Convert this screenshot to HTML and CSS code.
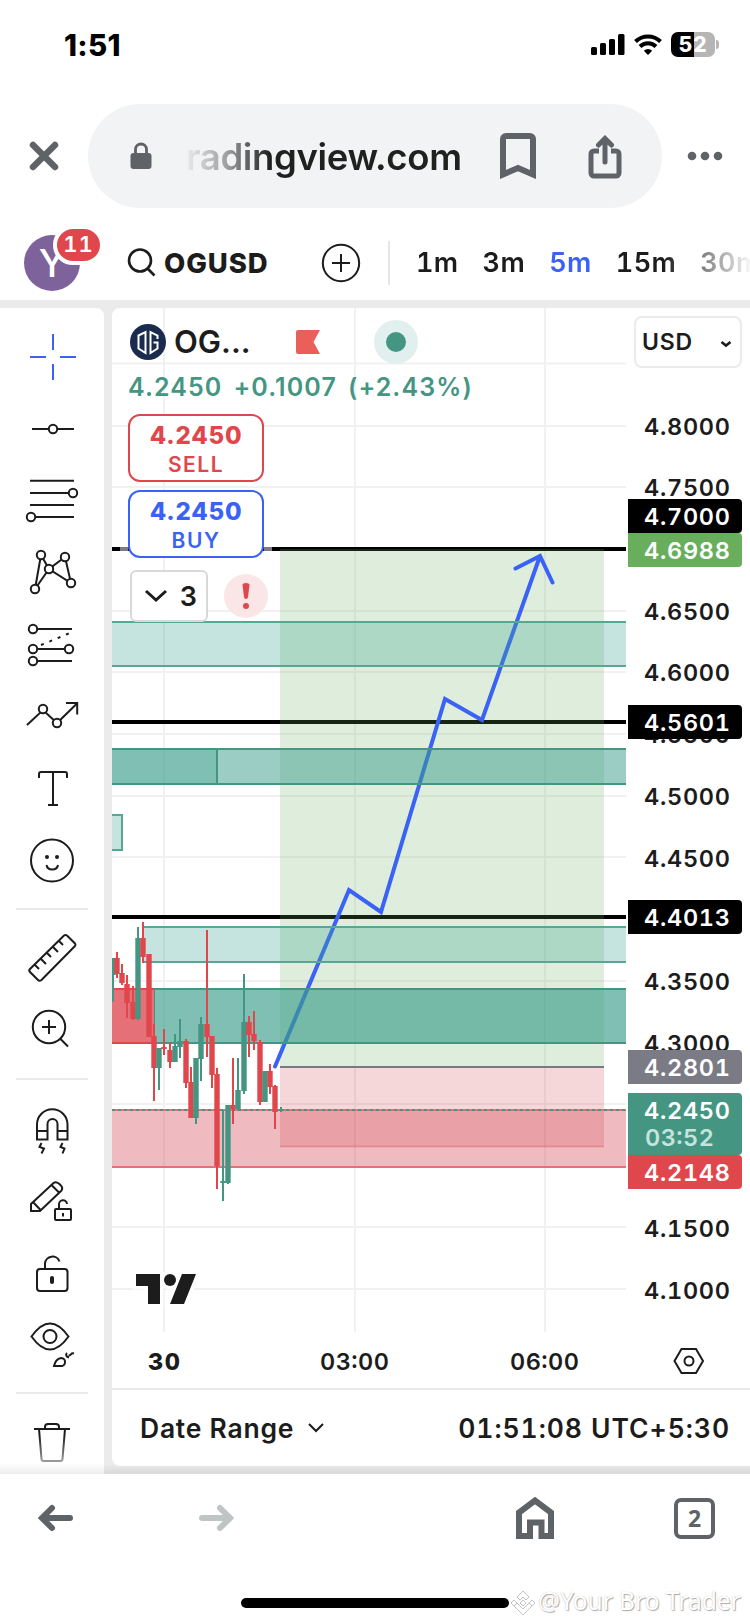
FILE: index.html
```html
<!DOCTYPE html>
<html lang="en">
<head>
<meta charset="UTF-8" />
<meta name="viewport" content="width=device-width, initial-scale=1.0">
<title>OGUSD 4.2450 – Chart</title>
<link rel="stylesheet" href="styles.css">
</head>
<body>

<!-- Status bar -->
<div class="status-bar">
  <span class="clock">1:51</span>
  <div class="status-icons">
    <svg width="34" height="22" viewBox="0 0 34 22"><rect x="0" y="13" width="6" height="8" rx="1.5"/><rect x="9" y="9" width="6" height="12" rx="1.5"/><rect x="18" y="5" width="6" height="16" rx="1.5"/><rect x="27" y="0" width="6.5" height="21" rx="1.5"/></svg>
    <svg class="wifi" width="28" height="22" viewBox="0 0 28 22"><path d="M1.5 7.5a18 18 0 0 1 25 0" /><path d="M6 12.5a11.5 11.5 0 0 1 16 0"/><path class="solid" d="M14 21l-4.2-4.2a6 6 0 0 1 8.4 0z"/></svg>
    <div class="battery"><span>52</span></div>
  </div>
</div>

<!-- Address bar -->
<div class="address-bar">
  <svg class="close" width="30" height="30" viewBox="0 0 30 30"><path d="M4 4l22 22M26 4L4 26"/></svg>
  <div class="url-pill">
    <svg class="lock" width="22" height="28" viewBox="0 0 22 28"><path d="M5.5 12V7.5a5.5 5.5 0 0 1 11 0V12" fill="none" stroke="#5f6368" stroke-width="2.8"/><rect x="0.5" y="11" width="21" height="16" rx="3" fill="#5f6368"/></svg>
    <span class="url">radingview.com</span>
    <svg class="bookmark" width="36" height="46" viewBox="0 0 36 46"><path d="M3 41.5V6a3 3 0 0 1 3-3h24a3 3 0 0 1 3 3v35.500L18 35z"/></svg>
    <svg class="share" width="34" height="44" viewBox="0 0 34 44"><path d="M11 16H6a3 3 0 0 0-3 3v19a3 3 0 0 0 3 3h22a3 3 0 0 0 3-3V19a3 3 0 0 0-3-3h-5"/><path d="M17 27V4M10.5 10L17 3.5 23.5 10" stroke-linecap="round"/></svg>
  </div>
  <svg class="more" width="36" height="10" viewBox="0 0 36 10"><circle cx="5" cy="5" r="4.3"/><circle cx="18" cy="5" r="4.3"/><circle cx="31" cy="5" r="4.3"/></svg>
</div>

<!-- Symbol and interval toolbar -->
<div class="toolbar">
  <div class="avatar">Y<span class="badge">11</span></div>
  <svg class="search" width="30" height="30" viewBox="0 0 30 30"><circle cx="13" cy="12.5" r="11"/><path d="M20.5 20.5l7 7"/></svg>
  <b class="symbol">OGUSD</b>
  <svg class="add" width="40" height="40" viewBox="0 0 40 40"><circle cx="20" cy="20" r="18.2"/><path d="M20 11v18M11 20h18"/></svg>
  <div class="intervals">
    <span>1m</span>
    <span>3m</span>
    <span class="active">5m</span>
    <span>15m</span>
    <span>30m</span>
  </div>
</div>

<div class="workspace">
  <!-- Drawing tools -->
  <div class="tools">
    <svg class="tool cross" viewBox="0 0 104 72"><path d="M53 13v16M53 43v16M30 36h16M60 36h16"/></svg>
    <svg class="tool" viewBox="0 0 104 72"><path d="M32 36h42"/><circle cx="53" cy="36" r="4.2"/></svg>
    <svg class="tool" viewBox="0 0 104 72"><path d="M30 15.800h44M30 28h44M30 40h44M30 52h44"/><circle cx="73" cy="28" r="4.2"/><circle cx="31" cy="52" r="4.2"/></svg>
    <svg class="tool" viewBox="0 0 104 72"><path d="M41 18L35 52 49 32 65 20l6 26-22-14zM41 18l8 14"/><circle cx="41" cy="18" r="4.2"/><circle cx="65" cy="20" r="4.2"/><circle cx="49" cy="32" r="4.2"/><circle cx="35" cy="52" r="4.2"/><circle cx="71" cy="46" r="4.2"/></svg>
    <svg class="tool" viewBox="0 0 104 72"><path d="M33 20h39M33 40h36M33 52h39"/><path d="M41 36l29-12" stroke-dasharray="3 6"/><circle cx="33" cy="20" r="4.2"/><circle cx="33" cy="40" r="4.2"/><circle cx="69" cy="40" r="4.2"/><circle cx="33" cy="52" r="4.2"/></svg>
    <svg class="tool" viewBox="0 0 104 72"><path d="M27 44l16-15 14 13 20-19.500M66 22h11.200v11.500"/><circle cx="43" cy="28" r="4.2"/><circle cx="57" cy="42" r="4.2"/></svg>
    <svg class="tool" viewBox="0 0 104 72"><path d="M39 25v-4q0-2 2-2h24q2 0 2 2v4M53 19v33M48 52h10"/></svg>
    <svg class="tool" viewBox="0 0 104 72"><circle cx="52" cy="35.5" r="21"/><path d="M46.500 40c1 6 10.500 6 11.500 0"/><circle class="dot" cx="47" cy="32" r="2"/><circle class="dot" cx="57" cy="32" r="2"/></svg>
    <hr class="sep-shapes">
    <svg class="tool" viewBox="0 0 104 72"><path d="M64 13.500q1.500-1 3 0l8 8q1 1.500 0 2.500L41.500 58q-2 1.500-3.500 0L30 50q-1.500-1.500 0-3zM35 43l4 4M41 37l5 5M47 31l4 4M53 25l5 5M59 19l4 4"/></svg>
    <svg class="tool" viewBox="0 0 104 72"><circle cx="49" cy="33" r="16.2"/><path d="M49 26v14M42 33h14M60 44.500l8 8"/></svg>
    <hr class="sep-measure">
    <svg class="tool" viewBox="0 0 104 72"><path d="M37 44.500V29.500a15 15 0 0 1 30.500 0v15h-10V29a5 5 0 0 0-10 0v15.500zM37 36h10.500M57.500 36h10M41.500 48l-2 4 4.500 1.500-2.500 5M62.500 48l-2 4 4 1.500-2 5"/></svg>
    <svg class="tool" viewBox="0 0 104 72"><path d="M31 44v-7l22.500-21q3-2 6.500 1.500t1.500 6L40 44zM33 35l8 8.500M51 17.500l8 8"/><rect x="55" y="42" width="16" height="11" rx="1"/><path d="M59 42v-4.500a4 4 0 0 1 8-.5M63 46v3.500"/></svg>
    <svg class="tool" viewBox="0 0 104 72"><rect x="37" y="30" width="30.5" height="22" rx="3"/><path d="M45 30v-5.500a7.500 7.500 0 0 1 14.500-2"/><rect class="dot" x="50" y="37" width="4" height="8" rx="2"/></svg>
    <svg class="tool" viewBox="0 0 104 72"><path d="M31.500 25.500q18.500-26 37 0q-18.500 26-37 0z"/><circle cx="50" cy="25.5" r="6.5"/><path d="M54 55q1.500-7 7-8 4.500.5 4 4.500t-5 3.500zM67 42c-2 2-.5 4 2 4.500M68.500 44.500c3 0 2-3 5.500-2"/></svg>
    <hr class="sep-manage">
    <svg class="tool" viewBox="0 0 104 72"><defs><linearGradient id="fade" x1="0" y1="0" x2="0" y2="1"><stop offset="0.2" stop-color="#1c1c1c"/><stop offset="1" stop-color="#999"/></linearGradient></defs><path d="M34 22h36M45 22v-2q0-3 3-3h8q3 0 3 3v2"/><path d="M39 22l2.500 30q.2 2 2 2h17q1.800 0 2-2L65 22" stroke="url(#fade)"/></svg>
  </div>

  <div class="chart-panel">
    <div class="chart">
      <svg class="plot" width="638" height="1080" viewBox="112 308 638 1080">
        <path class="grid" d="M112 363.500h514M112 426h514M112 487h514M112 611h514M112 672h514M112 734h514M112 796h514M112 857h514M112 981h514M112 1104h514M112 1227h514M112 1289h514M164 308v1024M355 308v1024M545 308v1024"/>
        <path class="level" d="M112 549h514M112 722h514M112 917h514"/>

        <!-- long position -->
        <rect class="target" x="280" y="549" width="324" height="518"/>
        <rect class="stop" x="280" y="1067" width="324" height="80"/>
        <path class="entry" d="M280 1067h324"/>
        <path class="stop-line" d="M280 1146.500h324"/>
        <path class="forecast" d="M275 1066.500L349 890 381 912 445 699 482 720 540 556M515.500 568.500L540 556 552.500 582.500"/>

        <!-- supply and demand zones -->
        <rect class="zone-light" x="112" y="622" width="514" height="44"/>
        <path class="edge-light" d="M112 622h514M112 666h514"/>
        <rect class="zone-dark" x="112" y="749" width="105" height="35"/>
        <rect class="zone-mid" x="217" y="749" width="409" height="35"/>
        <path class="edge" d="M112 749h514M112 784h514M217 749v35"/>
        <rect class="zone-light" x="112" y="815" width="10" height="35"/>
        <path class="edge-light" d="M112 815h10v35h-10"/>
        <rect class="zone-light" x="143" y="927" width="483" height="35"/>
        <path class="edge-light" d="M143 927h483M143 962h483"/>
        <rect class="zone-dark" x="154" y="989" width="472" height="54"/>
        <path class="edge" d="M626 989H154v54h472"/>
        <rect class="zone-sold" x="112" y="989" width="42" height="54"/>
        <path class="edge-red" d="M112 989h42M112 1043h42"/>
        <rect class="zone-pink" x="112" y="1110" width="514" height="57"/>
        <path class="edge-pink" d="M112 1110h514M112 1167h514"/>
        <path class="last-price" d="M112 1110h514"/>

        <g id="candles"></g>

        <!-- TradingView mark -->
        <path class="halo" d="M136 1274h24v30h-12v-18h-12zM182 1274h14l-12 30h-14z"/>
        <circle class="halo" cx="170" cy="1280" r="6"/>
        <path class="mark" d="M136 1274h24v30h-12v-18h-12zM182 1274h14l-12 30h-14z"/>
        <circle class="mark" cx="170" cy="1280" r="6"/>

        <g id="prices" class="axis"></g>
        <g class="axis">
          <text x="148" y="1370" textLength="32" class="day">30</text>
          <text x="320" y="1370" textLength="69">03:00</text>
          <text x="510" y="1370" textLength="69">06:00</text>
        </g>
        <path class="settings" d="M681.500 1349h14.500l7 12-7 12h-14.500l-7-12z"/>
        <circle class="settings" cx="689" cy="1361" r="4.5"/>
      </svg>

      <div class="legend">
        <div class="title">
          <svg class="coin" width="36" height="36" viewBox="0 0 36 36"><circle cx="18" cy="18" r="18"/><path d="M8.500 11.500L15.500 8v21l-7-4.500zM27.500 15v-3.500L20.500 8v21l7-4.500V18.500h-4"/></svg>
          <span class="name">OG...</span>
          <svg class="flag" width="24" height="24" viewBox="0 0 24 24"><path d="M2 0h22l-6.500 12L24 24H2q-2 0-2-2V2q0-2 2-2z"/></svg>
          <span class="market-open"></span>
        </div>
        <div class="change"><span>4.2450</span><span>+0.1007</span><span>(+2.43%)</span></div>
        <div class="order sell"><b>4.2450</b><span>SELL</span></div>
        <div class="order buy"><b>4.2450</b><span>BUY</span></div>
        <div class="indicators">
          <div class="count"><svg width="24" height="14" viewBox="0 0 24 14"><path d="M2 2l10 9L22 2"/></svg>3</div>
          <svg class="alert" width="44" height="44" viewBox="0 0 44 44"><circle class="alert-bg" cx="22" cy="22" r="22"/><path d="M18.500 11q0-2 3.500-2t3.500 2l-1.500 12q-.3 2-2 2t-2-2z"/><circle cx="22" cy="32" r="3"/></svg>
        </div>
      </div>

      <div class="currency">USD<svg width="12" height="8" viewBox="0 0 12 8"><path d="M1.500 2L6 5.500 10.500 2"/></svg></div>
    </div>

    <div class="range-bar">
      <span class="range">Date Range</span>
      <svg width="18" height="12" viewBox="0 0 18 12"><path d="M2 2l7 7 7-7"/></svg>
      <span class="utc">01:51:08 UTC+5:30</span>
    </div>
  </div>
</div>

<!-- Browser navigation -->
<div class="bottom-nav">
  <svg class="back" width="36" height="30" viewBox="0 0 36 30"><path d="M33 15H5M15 5L5 15l10 10"/></svg>
  <svg class="forward" width="36" height="30" viewBox="0 0 36 30"><path d="M4 15h28M22 5l10 10-10 10"/></svg>
  <svg class="home" width="38" height="42" viewBox="0 0 38 42"><path d="M3 39V15.500L19 3.500l16 12V39h-9.500V25.500h-11.500V39z"/></svg>
  <div class="tabs">2</div>
</div>
<div class="home-bar">
  <div class="pill"></div>
  <svg class="diamond" width="28" height="28" viewBox="0 0 28 28"><path d="M8 8l6-6 6 6-3 3-3-3-3 3zM2 14l3-3 3 3-3 3zM20 14l3-3 3 3-3 3zM11 14l3-3 3 3-3 3zM5 17l3-3 6 6 6-6 3 3-9 9z"/></svg>
  <span class="watermark">@Your Bro Trader</span>
</div>

<script>
  const NS = 'http://www.w3.org/2000/svg';

  function add(parent, tag, attrs, text) {
    const el = document.createElementNS(NS, tag);
    for (const key in attrs) el.setAttribute(key, attrs[key]);
    if (text) el.textContent = text;
    parent.appendChild(el);
  }

  // x, high, low, body top, body bottom, direction
  const candles = [
    [113, 958, 1001.5, 958, 975, 'up'],
    [117, 952, 978, 958, 974, 'down'],
    [122, 964, 985, 973, 983, 'down'],
    [127, 975, 1018, 984, 1003, 'down'],
    [133, 986, 1020, 1002, 1019, 'down'],
    [138, 927, 1020, 938, 1019, 'up'],
    [143, 922, 963, 938, 957, 'down'],
    [149, 954, 1037, 954, 1037, 'down'],
    [154, 1024, 1101, 1036, 1068, 'down'],
    [159, 1048, 1090, 1048, 1068, 'up'],
    [164, 1029, 1055, 1047, 1049, 'down'],
    [170, 1042, 1068, 1050, 1062, 'down'],
    [175, 1034, 1062, 1046, 1062, 'up'],
    [180, 1019, 1058, 1041, 1047, 'up'],
    [186, 1039, 1088, 1041, 1083, 'down'],
    [191, 1067, 1118, 1082, 1118, 'down'],
    [196, 1058, 1124, 1058, 1118, 'up'],
    [201, 1017, 1081, 1024, 1059, 'up'],
    [207, 930, 1057, 1024, 1037, 'down'],
    [212, 1036, 1088, 1036, 1075, 'down'],
    [217, 1068, 1189, 1074, 1166, 'down'],
    [223, 1110, 1201, 1181, 1183, 'up'],
    [228, 1105, 1184, 1105, 1183, 'up'],
    [233, 1058, 1124, 1105, 1109, 'down'],
    [238, 1058, 1110, 1090, 1109, 'up'],
    [244, 974, 1094, 1022, 1091, 'up'],
    [249, 1016, 1057, 1022, 1035, 'down'],
    [254, 1011, 1050, 1034, 1041, 'down'],
    [260, 1040, 1105, 1042, 1102, 'down'],
    [265, 1071, 1102, 1071, 1102, 'up'],
    [270, 1064, 1094, 1071, 1087, 'down'],
    [275, 1085, 1129, 1086, 1112, 'down'],
    [281, 1107, 1112, 1109, 1111, 'up']
  ];
  const candleBox = document.getElementById('candles');
  candles.forEach(([x, high, low, top, bottom, dir]) => {
    add(candleBox, 'rect', { x: x - 1, y: high, width: 2, height: low - high, class: dir });
    add(candleBox, 'rect', { x: x - 2.7, y: top, width: 5.4, height: bottom - top, class: dir });
  });

  const priceBox = document.getElementById('prices');
  const ticks = [
    ['4.8000', 426], ['4.7500', 487.5], ['4.6500', 611], ['4.6000', 672.5], ['4.5500', 734],
    ['4.5000', 796], ['4.4500', 858], ['4.3500', 981], ['4.3000', 1043], ['4.1500', 1228], ['4.1000', 1290]
  ];
  ticks.forEach(([label, y]) => add(priceBox, 'text', { x: 644, y: y + 8.5, textLength: 86 }, label));

  const tags = [
    ['4.7000', 499, 34, '#000'], ['4.6988', 533, 34, '#68ae5d'], ['4.5601', 705, 34, '#000'],
    ['4.4013', 900, 34, '#000'], ['4.2801', 1050, 34, '#7a7b85'], ['4.2450', 1093, 62, '#449682'],
    ['4.2148', 1155, 34, '#e0474c']
  ];
  tags.forEach(([label, y, h, fill]) => {
    add(priceBox, 'path', { d: `M628 ${y}h110q4 0 4 4v${h - 8}q0 4-4 4h-110z`, fill });
    add(priceBox, 'text', { x: 644, y: y + 25.5, textLength: 86, class: 'on-tag' }, label);
  });
  add(priceBox, 'text', { x: 645, y: 1146, textLength: 69, class: 'countdown' }, '03:52');
</script>

</body>
</html>
```

FILE: styles.css
```css
* {
  box-sizing: border-box;
  margin: 0;
  padding: 0;
}
body {
  font-family: Inter, 'Liberation Sans', sans-serif;
  font-weight: 600;
  background: #fff;
  color: #1c1c1c;
  width: 750px;
  height: 1624px;
  overflow: hidden;
}
svg {
  display: block;
  flex: none;
  fill: none;
}

/* status bar */
.status-bar {
  height: 104px;
  display: flex;
  justify-content: space-between;
  padding: 32px 31px 0 64px;
  color: #000;
}
.clock {
  font-size: 29.5px;
  line-height: 27px;
  font-weight: 800;
  letter-spacing: 0.3px;
}
.status-icons {
  display: flex;
  align-items: center;
  height: 25px;
  gap: 9px;
}
.status-icons svg {
  fill: #000;
}
.status-icons .wifi {
  fill: none;
  stroke: #000;
  stroke-width: 4;
}
.status-icons .wifi .solid {
  fill: #000;
  stroke: none;
}
.battery {
  position: relative;
  width: 44px;
  height: 25px;
  margin-right: 4px;
  border-radius: 7px;
  background: linear-gradient(90deg, #000 52%, #b5b5b5 52%);
  color: #fff;
  font-size: 21px;
  line-height: 25px;
  font-weight: 800;
  letter-spacing: 1px;
  text-align: center;
}
.battery::after {
  content: '';
  position: absolute;
  right: -4px;
  top: 8px;
  width: 3px;
  height: 9px;
  border-radius: 0 3px 3px 0;
  background: #b5b5b5;
}

/* address bar */
.address-bar {
  height: 104px;
  display: flex;
  align-items: center;
  padding-left: 29px;
}
.close {
  stroke: #5f6368;
  stroke-width: 6.5;
  stroke-linecap: round;
}
.url-pill {
  width: 574px;
  height: 104px;
  margin-left: 29px;
  padding-left: 42px;
  border-radius: 52px;
  background: #f1f3f5;
  display: flex;
  align-items: center;
}
.url {
  width: 280px;
  margin: 2px 0 0 34px;
  font-size: 36.5px;
  letter-spacing: -0.35px;
  white-space: nowrap;
  color: transparent;
  background: linear-gradient(90deg, #e9ebed, #9a9c9e 15%, #1e211e 30%);
  -webkit-background-clip: text;
  background-clip: text;
}
.bookmark,
.share {
  stroke: #5f6368;
  stroke-width: 6;
}
.bookmark {
  margin-left: 34px;
}
.share {
  margin: 2px 0 0 52px;
  stroke-width: 5;
}
.more {
  margin-left: 25px;
  fill: #5f6368;
}

/* toolbar */
.toolbar {
  height: 92px;
  display: flex;
  align-items: center;
  padding: 17px 0 0 24px;
  overflow: hidden;
}
.avatar {
  position: relative;
  flex: none;
  width: 56px;
  height: 56px;
  border-radius: 50%;
  background: #7e629b;
  color: #fff;
  font-size: 38px;
  font-weight: 500;
  line-height: 56px;
  text-align: center;
}
.badge {
  position: absolute;
  left: 29px;
  top: -10px;
  width: 51px;
  height: 40px;
  border: 4px solid #fff;
  border-radius: 20px;
  background: #e0474c;
  font-size: 22px;
  font-weight: 600;
  line-height: 31px;
  letter-spacing: 1px;
  font-feature-settings: 'tnum';
}
.search {
  margin-left: 47px;
  stroke: #1c1c1c;
  stroke-width: 2.6;
}
.symbol {
  flex: none;
  width: 104px;
  margin-left: 7px;
  font-size: 27.5px;
  font-weight: 800;
  letter-spacing: 0.9px;
}
.add {
  margin: 1px 0 0 53px;
  stroke: #1c1c1c;
  stroke-width: 2;
}
.intervals {
  flex: 1;
  min-width: 0;
  display: flex;
  align-items: center;
  gap: 24px;
  height: 44px;
  margin-left: 27px;
  padding-left: 26px;
  border-left: 2px solid #e6e6e6;
  font-size: 27px;
  letter-spacing: 0.4px;
  font-feature-settings: 'tnum';
  white-space: nowrap;
  -webkit-mask-image: linear-gradient(90deg, #000 76%, transparent 101%);
  mask-image: linear-gradient(90deg, #000 76%, transparent 101%);
}
.intervals .active {
  color: #3a63f5;
}

/* workspace */
.workspace {
  display: flex;
  gap: 8px;
  height: 1174px;
  padding-top: 8px;
  background: linear-gradient(180deg, #ebebeb 1164px, #d8d8d8);
}
.tools {
  width: 104px;
  padding-top: 13px;
  border-radius: 0 8px 0 0;
  background: linear-gradient(180deg, #fff 1155px, #ededed);
  overflow: hidden;
}
.tool {
  width: 104px;
  height: 72px;
  stroke: #1c1c1c;
  stroke-width: 2;
}
.tool circle {
  fill: #fff;
}
.tool .dot {
  fill: #1c1c1c;
  stroke: none;
}
.cross {
  stroke: #3a63f5;
}
.tools hr {
  height: 2px;
  border: 0;
  background: #e9e9e9;
}
.tools .sep-shapes {
  margin: 11px 16px 12px;
}
.tools .sep-measure {
  margin: 12px 16px 15px;
}
.tools .sep-manage {
  margin: 9px 16px 13px;
}

/* chart */
.chart-panel {
  width: 638px;
  height: 1158px;
  border-radius: 8px 0 0 8px;
  background: #fff;
}
.chart {
  position: relative;
  height: 1080px;
}
.grid {
  stroke: #000;
  stroke-opacity: 0.055;
  stroke-width: 2;
}
.level {
  stroke: #000;
  stroke-width: 4;
}
.target {
  fill: rgba(103, 175, 91, 0.21);
}
.stop {
  fill: rgba(205, 55, 65, 0.2);
}
.entry,
.stop-line,
.edge,
.edge-light,
.edge-red,
.edge-pink,
.last-price {
  stroke: #757a85;
  stroke-width: 2;
}
.stop-line {
  stroke: rgba(224, 71, 76, 0.25);
}
.forecast {
  stroke: #3a63f5;
  stroke-width: 4;
  stroke-linecap: round;
}
.zone-light {
  fill: rgba(62, 165, 148, 0.3);
}
.zone-mid {
  fill: rgba(57, 155, 139, 0.5);
}
.zone-dark {
  fill: rgba(60, 156, 138, 0.65);
}
.zone-sold {
  fill: #e57078;
}
.zone-pink {
  fill: rgba(212, 61, 75, 0.35);
}
.edge {
  stroke: #449682;
}
.edge-light {
  stroke: #56a794;
}
.edge-red {
  stroke: #e0474c;
}
.edge-pink {
  stroke: #e4707a;
}
.last-price {
  stroke: #449682;
  stroke-dasharray: 3 3;
}
.up {
  fill: #449682;
}
.down {
  fill: #e0474c;
}
.mark {
  fill: #1c1c1c;
}
.halo {
  fill: #fff;
  stroke: #fff;
  stroke-width: 7;
}
.axis {
  fill: #1c1c1c;
  font-size: 23.5px;
  font-feature-settings: 'tnum';
}
.axis .day {
  font-weight: 800;
}
.axis .on-tag {
  fill: #fff;
}
.axis .countdown {
  fill: #c5e4de;
}
.settings {
  stroke: #1c1c1c;
  stroke-width: 2;
}

/* legend over the chart */
.legend {
  position: absolute;
  left: 16px;
  top: 12px;
}
.title {
  display: flex;
  align-items: center;
  height: 44px;
  padding-left: 2px;
}
.coin {
  fill: #1b2b4e;
}
.coin path {
  stroke: #fff;
  stroke-width: 2;
}
.name {
  width: 76px;
  margin: -2px 46px 0 8px;
  font-size: 31px;
}
.flag {
  fill: #eb5f5b;
}
.market-open {
  width: 44px;
  height: 44px;
  margin-left: 54px;
  border: 12px solid #e1f0ee;
  border-radius: 50%;
  background: #449682;
}
.change {
  display: flex;
  height: 50px;
  color: #449682;
  font-size: 25px;
  line-height: 47px;
  letter-spacing: 1.1px;
}
.change span {
  margin-right: 11px;
}
.order {
  width: 136px;
  height: 68px;
  margin-bottom: 8px;
  padding-top: 6px;
  border: 2px solid;
  border-radius: 12px;
  background: #fff;
  font-size: 21px;
  line-height: 28px;
  letter-spacing: 1.5px;
  text-align: center;
}
.order b {
  display: block;
  font-size: 24px;
  font-weight: 800;
  letter-spacing: 0.8px;
}
.order span {
  display: block;
  line-height: 29px;
}
.sell {
  color: #e0474c;
}
.buy {
  position: relative;
  color: #3a63f5;
}
.buy::before {
  content: '';
  position: absolute;
  left: -10px;
  right: -10px;
  top: 55px;
  height: 4px;
  border: solid #7a7b87;
  border-width: 0 8px;
}
.indicators {
  display: flex;
  align-items: center;
  gap: 16px;
  margin: 12px 0 0 2px;
}
.count {
  display: flex;
  align-items: center;
  justify-content: space-between;
  width: 78px;
  height: 52px;
  padding: 0 9px 0 12px;
  border: 2px solid #d9d9d9;
  border-radius: 6px;
  background: #fff;
  font-size: 27px;
}
.count svg {
  stroke: #1c1c1c;
  stroke-width: 3;
}
.alert {
  fill: #e0474c;
}
.alert-bg {
  fill: #fae5e7;
}
.currency {
  position: absolute;
  right: 8px;
  top: 8px;
  display: flex;
  align-items: center;
  justify-content: space-between;
  width: 108px;
  height: 52px;
  padding: 0 8px 1px 6px;
  border: 2px solid #ebebeb;
  border-radius: 8px;
  background: #fff;
  font-size: 23px;
  letter-spacing: 0.8px;
}
.currency svg {
  margin-top: 4px;
  stroke: #1c1c1c;
  stroke-width: 2.6;
}

.range-bar {
  display: flex;
  align-items: center;
  height: 78px;
  padding: 0 20px 0 28px;
  border-top: 2px solid #e9e9e9;
  font-size: 26.5px;
}
.range {
  letter-spacing: 0.75px;
}
.range-bar svg {
  margin-left: 13px;
  stroke: #1c1c1c;
  stroke-width: 2;
}
.utc {
  margin-left: auto;
  letter-spacing: 0.95px;
  font-feature-settings: 'tnum';
}

/* browser navigation */
.bottom-nav {
  display: flex;
  align-items: center;
  height: 88px;
  padding: 0 35px 0 37px;
}
.bottom-nav svg {
  stroke: #5f6368;
  stroke-width: 6;
}
.bottom-nav .back,
.bottom-nav .forward {
  stroke-linecap: round;
}
.bottom-nav .forward {
  margin-left: 125px;
  stroke: #c1c4c5;
}
.home {
  margin-left: 282px;
}
.tabs {
  width: 41px;
  height: 41px;
  margin-left: auto;
  border: 4px solid #5f6368;
  border-radius: 7px;
  color: #5f6368;
  font: 700 23px/33px 'Noto Sans', sans-serif;
  text-align: center;
}
.home-bar {
  display: flex;
  align-items: center;
  height: 62px;
  padding: 20px 0 0 241px;
}
.pill {
  flex: none;
  width: 268px;
  height: 10px;
  border-radius: 5px;
  background: #000;
}
.diamond {
  fill: #fff;
  stroke: #c4c4c4;
  stroke-width: 1;
}
.watermark {
  margin: -6px 0 0 1px;
  color: #fff;
  font: 400 24.5px 'Noto Sans', sans-serif;
  white-space: nowrap;
  text-shadow: 1px 1px 1px #aaa, 0 0 1px #bbb;
}
```
